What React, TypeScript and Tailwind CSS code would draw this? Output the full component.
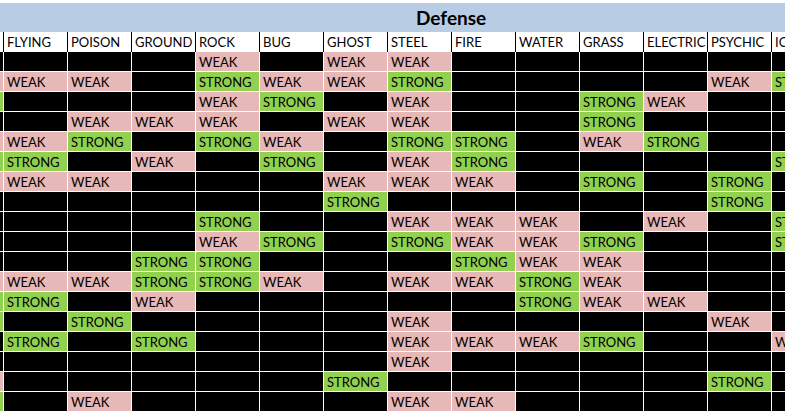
const headers = ["", "FLYING", "POISON", "GROUND", "ROCK", "BUG", "GHOST", "STEEL", "FIRE", "WATER", "GRASS", "ELECTRIC", "PSYCHIC", "ICE"];

// one string per row: first char is the clipped column on the left, then FLYING..ICE
const rows = [
  "----W-WW------",
  "WWW-SWWS----WS",
  "S---WS-W--SW--",
  "--WWW-WW--S---",
  "WWS-SW-SS-WS--",
  "SS-W-S-WS----S",
  "WWW---WWW-S-S-",
  "------S-----S-",
  "----S--WWW-W-S",
  "----WS-SWWS--S",
  "---SS---SWW---",
  "WWWSSW-WWSW---",
  "SS-W-----SWW--",
  "S-S----W----W-",
  "-S-S---WWWS--W",
  "-------W------",
  "W-----S-----S-",
  "S-W----WW-----",
];

const font = { fontFamily: "Lato, 'Open Sans', sans-serif" };

function Cell({ code, clipped }: { code: string; clipped?: boolean }) {
  if (code === "W") {
    return <div className="h-[19px] overflow-hidden whitespace-nowrap bg-[#e6b8b7] pl-[3px] text-[13px] leading-[20px] text-black">{clipped ? null : "WEAK"}</div>;
  }
  if (code === "S") {
    return <div className="h-[19px] overflow-hidden whitespace-nowrap bg-[#92d050] pl-[3px] text-[13px] leading-[20px] text-black">{clipped ? null : "STRONG"}</div>;
  }
  return <div className="h-[19px] bg-black" />;
}

export default function App() {
  return (
    <div className="h-[412px] w-[785px] overflow-hidden bg-white" style={font}>
      <div className="h-[3px] bg-white" />
      <div className="flex h-[29px] items-center bg-[#b8cce4] pl-[416px] text-[19px] font-bold leading-none text-black">
        Defense
      </div>
      <div className="grid grid-cols-[3px_repeat(13,63px)] gap-x-px bg-black">
        {headers.map((h, i) => (
          <div key={i} className="h-[20px] overflow-hidden whitespace-nowrap bg-white pl-[3px] text-[13px] leading-[20px] text-black">
            {h}
          </div>
        ))}
      </div>
      <div className="grid grid-cols-[3px_repeat(13,63px)] gap-px bg-white">
        {rows.map((row, r) =>
          row.split("").map((code, c) => <Cell key={`${r}-${c}`} code={code} clipped={c === 0} />)
        )}
      </div>
    </div>
  );
}
